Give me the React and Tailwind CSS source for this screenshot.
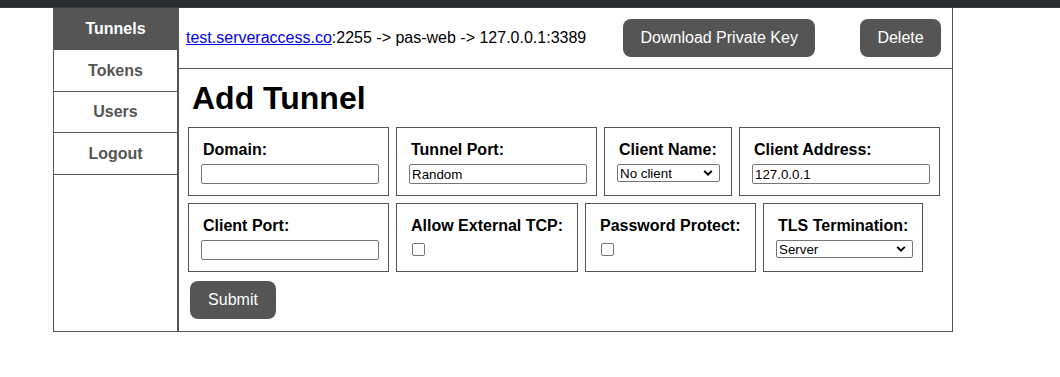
const menu = ["Tunnels", "Tokens", "Users", "Logout"];
const menuHeights = ["h-[42px]", "h-[42px]", "h-[41px]", "h-[42px]"];

function Chevron() {
  return (
    <svg
      width="10"
      height="7"
      viewBox="0 0 10 7"
      className="pointer-events-none absolute right-[7px] top-1/2 -translate-y-1/2"
    >
      <path d="M1.2 1.4 5 5.2 8.8 1.4" fill="none" stroke="#000" strokeWidth="2" />
    </svg>
  );
}

function TextField({ value = "" }) {
  return (
    <input
      type="text"
      defaultValue={value}
      className="mt-[5px] h-[20px] w-[178px] rounded-[2px] border border-[#767676] bg-white px-[2px] text-[13.33px] text-black outline-none"
    />
  );
}

function SelectField({ width, value, options }) {
  return (
    <div className={`relative mt-[5px] h-[18px] ${width}`}>
      <select
        defaultValue={value}
        className="block h-[18px] w-full appearance-none rounded-[2px] border border-[#767676] bg-white py-0 pl-[2px] text-[13.33px] leading-[15px] text-black outline-none"
      >
        {options.map((o) => (
          <option key={o}>{o}</option>
        ))}
      </select>
      <Chevron />
    </div>
  );
}

function CheckField() {
  return (
    <input
      type="checkbox"
      className="ml-[3px] mt-[8px] h-[13px] w-[13px] appearance-none rounded-[2px] border border-[#767676] bg-white"
    />
  );
}

function Card({ label, width, children }) {
  return (
    <div className={`flex h-[69px] flex-col border border-[#555] pl-[12px] pt-[13px] ${width}`}>
      <label className="ml-[2px] text-[16px] font-bold leading-[18px] text-black">{label}</label>
      {children}
    </div>
  );
}

export default function App() {
  return (
    <div className="min-h-[377px] bg-white font-['Liberation_Sans',Arial,sans-serif] text-[16px] text-black">
      <div className="h-[8px] border-b border-[#3b3c40] bg-[#2a2b2f]" />

      <div className="ml-[53px] flex w-[900px] border-b border-r border-[#555]">
        {/* sidebar */}
        <div className="flex w-[126px] flex-col border-l border-r-2 border-[#555]">
          {menu.map((item, i) => (
            <div
              key={item}
              className={`flex items-center justify-center border-b border-[#555] font-bold ${menuHeights[i]} ${
                i === 0 ? "bg-[#555] text-white" : "text-[#555]"
              }`}
            >
              {item}
            </div>
          ))}
        </div>

        {/* main */}
        <div className="flex flex-1 flex-col">
          <div className="flex h-[61px] items-center border-b border-[#555] pl-[7px]">
            <span>
              <a href="#" className="text-[#0000ee] underline">
                test.serveraccess.co
              </a>
              :2255 -&gt; pas-web -&gt; 127.0.0.1:3389
            </span>
            <button className="ml-[37px] h-[38px] w-[192px] rounded-[8px] bg-[#555] text-white">
              Download Private Key
            </button>
            <button className="ml-auto mr-[11px] h-[38px] w-[81px] rounded-[8px] bg-[#555] text-white">
              Delete
            </button>
          </div>

          <div className="pb-[12px] pl-[9px]">
            <h1 className="ml-[4px] mb-[10px] mt-[11px] text-[32px] font-bold leading-[37px]">
              Add Tunnel
            </h1>

            <div className="flex flex-wrap gap-[7px]">
              <Card label="Domain:" width="w-[201px]">
                <TextField />
              </Card>
              <Card label="Tunnel Port:" width="w-[201px]">
                <TextField value="Random" />
              </Card>
              <Card label="Client Name:" width="w-[128px]">
                <SelectField width="w-[103px]" value="No client" options={["No client"]} />
              </Card>
              <Card label="Client Address:" width="w-[201px]">
                <TextField value="127.0.0.1" />
              </Card>
              <Card label="Client Port:" width="w-[201px]">
                <TextField />
              </Card>
              <Card label="Allow External TCP:" width="w-[182px]">
                <CheckField />
              </Card>
              <Card label="Password Protect:" width="w-[171px]">
                <CheckField />
              </Card>
              <Card label="TLS Termination:" width="w-[160px]">
                <SelectField
                  width="w-[137px]"
                  value="Server"
                  options={["Server", "Client", "Passthrough"]}
                />
              </Card>
            </div>

            <button className="ml-[2px] mt-[9px] h-[38px] w-[86px] rounded-[8px] bg-[#555] text-white">
              Submit
            </button>
          </div>
        </div>
      </div>
    </div>
  );
}
